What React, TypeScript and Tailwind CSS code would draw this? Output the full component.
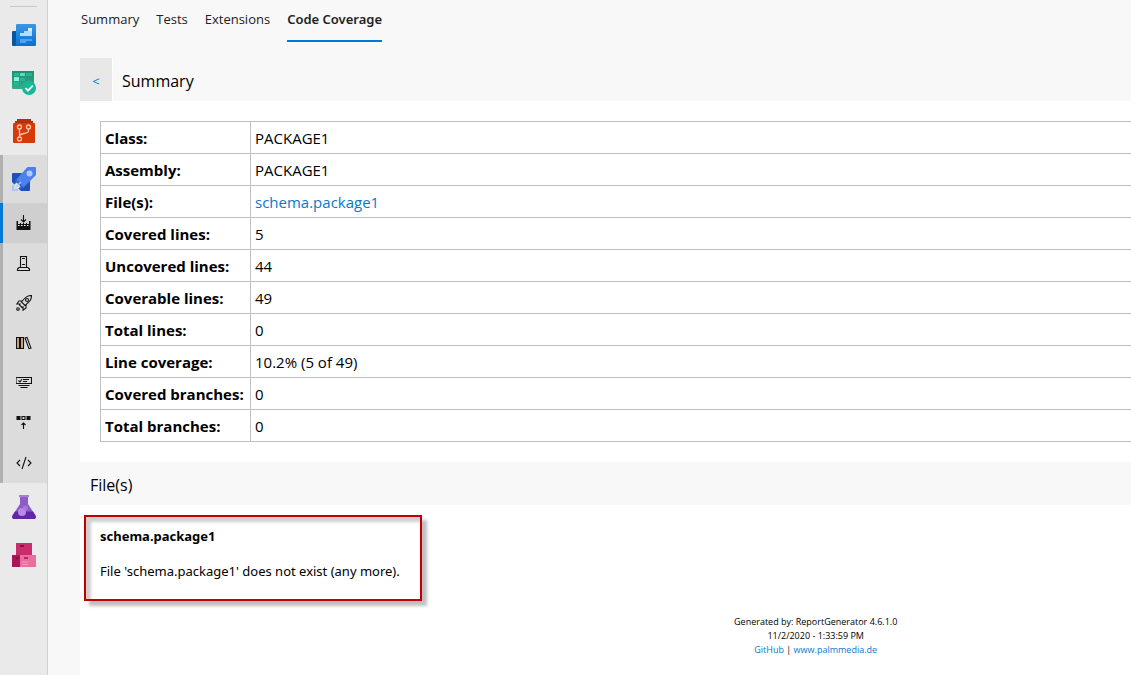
import type { ReactNode } from 'react'
import clsx from 'clsx'

type NavItem = { label: string; icon: ReactNode; active?: boolean }

function ServiceIcon({ children }: { children: ReactNode }) {
  return (
    <svg viewBox="0 0 24 24" className="size-6" aria-hidden="true">
      {children}
    </svg>
  )
}

function LineIcon({ children }: { children: ReactNode }) {
  return (
    <svg viewBox="0 0 16 16" className="size-4" fill="none" stroke="#111" strokeWidth="1.1" aria-hidden="true">
      {children}
    </svg>
  )
}

const topServices: NavItem[] = [
  {
    label: 'Overview',
    icon: (
      <ServiceIcon>
        <defs>
          <linearGradient id="overview" x1="0" y1="0" x2="0" y2="1">
            <stop offset="0" stopColor="#3c97e4" />
            <stop offset="1" stopColor="#0c6fd1" />
          </linearGradient>
        </defs>
        <path d="M0 9a1 1 0 0 1 1-1h3v12h3v3H1a1 1 0 0 1-1-1z" fill="#0b559f" />
        <path d="M5 1h18a1 1 0 0 1 1 1v20a1 1 0 0 1-1 1H3q1 0 1-2V2a1 1 0 0 1 1-1z" fill="url(#overview)" />
        <path d="M8 10h4V8h4V5h4v8H8z" fill="#b5dcfb" />
        <path d="M16 5h4v3h-4z" fill="#d8eefe" />
        <path d="M8 16h12v2h-6v2H8z" fill="#4ba5ee" />
      </ServiceIcon>
    ),
  },
  {
    label: 'Boards',
    icon: (
      <ServiceIcon>
        <defs>
          <linearGradient id="boards" x1="0" y1="0" x2="0" y2="1">
            <stop offset="0" stopColor="#1f8f70" />
            <stop offset="1" stopColor="#37ab8a" />
          </linearGradient>
        </defs>
        <path d="M0 0h22v18H1a1 1 0 0 1-1-1z" fill="url(#boards)" />
        <path d="M2 2h5v3H2zM14 2h6v3h-6zM2 11h5v3H2z" fill="#22b795" />
        <path d="M8 2h5v3H8z" fill="#5fd8bd" />
        <path d="M2 6h5v4H2z" fill="#86f0dc" />
        <path d="M8 7h5v3H8z" fill="#22b795" />
        <circle cx="17" cy="17" r="7" fill="#18b797" />
        <path d="M13.5 17l2.5 2.7 4.8-5" fill="none" stroke="#e7fff9" strokeWidth="1.8" />
      </ServiceIcon>
    ),
  },
  {
    label: 'Repos',
    icon: (
      <ServiceIcon>
        <path d="M5 0h14v2h2v3H3V2h2z" fill="#b5300a" />
        <path d="M1 5a1 1 0 0 1 1-1h20a1 1 0 0 1 1 1v18a1 1 0 0 1-1 1H2a1 1 0 0 1-1-1z" fill="#d63b07" />
        <g fill="none" stroke="#fbc3ae" strokeWidth="1.3">
          <path d="M7.5 10v8M16.5 10v2c0 3-9 2-9 5" />
          <circle cx="7.5" cy="8" r="2" />
          <circle cx="16.5" cy="8" r="2" />
          <circle cx="7.5" cy="20" r="2" />
        </g>
      </ServiceIcon>
    ),
  },
]

const pipelines: NavItem = {
  label: 'Pipelines',
  icon: (
    <ServiceIcon>
      <path d="M1 6h9l-7 12-3-3V7a1 1 0 0 1 1-1z" fill="#1f4fb8" />
      <path d="M18 13v10a1 1 0 0 1-1 1H9l-3-3z" fill="#1f4fb8" />
      <path d="M15.5 0H23a1 1 0 0 1 1 1v7L10.5 21.5 3 14z" fill="#4b80ed" />
      <path d="M4 12.5l7.5 7.5-3 2-6-6z" fill="#2c62cf" />
      <circle cx="17.500" cy="6.5" r="3" fill="#b3cbfb" />
      <path d="M3.5 16.5l4 4" stroke="#dbe6fc" strokeWidth="3" />
      <path d="M0 18h2v4h4v2H0z" fill="#a9c6fa" />
      <path d="M4.5 19.5L9 15" stroke="#a9c6fa" strokeWidth="1.5" />
    </ServiceIcon>
  ),
}

const pipelineItems: NavItem[] = [
  {
    label: 'Builds',
    active: true,
    icon: (
      <LineIcon>
        <path d="M7.5 0v7M5 4.5L7.5 7 10 4.5" />
        <path d="M.5 15V6H2v2h11V6h1.500v9z" fill="#111" stroke="none" />
        <path d="M2 8.500h11" stroke="#cfcfcf" strokeDasharray="2 1" />
        <path d="M2 10.500h12" stroke="#fff" strokeDasharray="1.500 1.500" />
      </LineIcon>
    ),
  },
  {
    label: 'Releases',
    icon: (
      <LineIcon>
        <path d="M4.500 12V1.500h6V12M6 3.500h3M6 9.500h3M3 12.500h9M3 12.500L1.500 14v1.500h12V14L12 12.500" />
      </LineIcon>
    ),
  },
  {
    label: 'Deployments',
    icon: (
      <LineIcon>
        <path d="M15.500.5c-4 0-6 1.500-10 6.500L9 10.500c5-4 6.500-6 6.500-10zM6.500 6H3L.8 9h3.500M10 9.500V13l-3 2.200V12M4.500 8.500L3.500 10 6 12.500l1.500-1" />
        <circle cx="11" cy="5" r="1.5" />
        <circle cx="2" cy="14" r="1.3" />
      </LineIcon>
    ),
  },
  {
    label: 'Library',
    icon: (
      <LineIcon>
        <path d="M.5 2.500h3v11h-3zM4.500 2.500h3v11h-3zM9 3l2-.6 4 10.700-2 .6z" />
        <path d="M2 3v10M6 3v10" stroke="#b9793a" />
      </LineIcon>
    ),
  },
  {
    label: 'Task groups',
    icon: (
      <LineIcon>
        <path d="M0 2.500h15.500v6H0zM7 4.500h6M7 6.500h4M2.500 10.500h11M4.500 12.500h7" />
        <path d="M2.500 5.500L4 7l2-3" />
      </LineIcon>
    ),
  },
  {
    label: 'Deployment groups',
    icon: (
      <LineIcon>
        <path d="M.5 1h4v4h-4zM10.500 1h4v4h-4z" fill="#111" stroke="none" />
        <path d="M6 1.500h3v3H6zM7.500 14V8M5.500 10l2-2 2 2" />
      </LineIcon>
    ),
  },
  {
    label: 'XAML',
    icon: (
      <LineIcon>
        <path d="M4 5L1 8l3 3M12 5l3 3-3 3M10 2L6 14" />
      </LineIcon>
    ),
  },
]

const bottomServices: NavItem[] = [
  {
    label: 'Test Plans',
    icon: (
      <ServiceIcon>
        <path d="M8 1h8v8l7.500 11.500c1 1.800 0 3.500-2 3.500h-19c-2 0-3-1.700-2-3.500L8 9z" fill="#8e5bc8" />
        <path d="M3 16.500h18l2.500 4c1 1.800 0 3.500-2 3.500h-19c-2 0-3-1.700-2-3.500z" fill="#6425a8" />
        <path d="M7 0h10v2H7z" fill="#a47ddd" />
        <circle cx="10" cy="17" r="4" fill="#b78bea" />
        <circle cx="13.5" cy="13" r="2.5" fill="#a678dc" />
      </ServiceIcon>
    ),
  },
  {
    label: 'Artifacts',
    icon: (
      <ServiceIcon>
        <path d="M4 0h16v12H4z" fill="#c92d6c" />
        <path d="M0 12h8v12H0z" fill="#ad1457" />
        <path d="M8 12h16v12H8z" fill="#ec6d9f" />
        <path d="M8 2h4v2H8zM4 14h3v2H4z" fill="#8d0f43" />
        <path d="M12 14h4v2h-4z" fill="#b8255f" />
        <path d="M10 19h6M10 21.500h6" stroke="#f59abd" />
      </ServiceIcon>
    ),
  },
]

const tabs = ['Summary', 'Tests', 'Extensions', 'Code Coverage']

const summary = [
  ['Class:', 'PACKAGE1'],
  ['Assembly:', 'PACKAGE1'],
  ['File(s):', 'schema.package1'],
  ['Covered lines:', '5'],
  ['Uncovered lines:', '44'],
  ['Coverable lines:', '49'],
  ['Total lines:', '0'],
  ['Line coverage:', '10.2% (5 of 49)'],
  ['Covered branches:', '0'],
  ['Total branches:', '0'],
]

function ServiceLink({ item }: { item: NavItem }) {
  return (
    <a href="#" aria-label={item.label} className="flex h-12 items-center justify-center">
      {item.icon}
    </a>
  )
}

function Sidebar() {
  return (
    <nav className="w-12 shrink-0 border-r border-[#d0d0d0] bg-[#eaeaea]">
      <div className="mx-[10px] mt-[6px] mb-1 h-px bg-[#c8c8c8]" />
      {topServices.map((item) => (
        <ServiceLink key={item.label} item={item} />
      ))}
      <div className="bg-[#dcdcdc]">
        <div className="border-l-[3px] border-[#b0b0b0] pr-[3px]">
          <ServiceLink item={pipelines} />
        </div>
        {pipelineItems.map((item) => (
          <a
            key={item.label}
            href="#"
            aria-label={item.label}
            className={clsx(
              'flex h-10 items-center justify-center border-l-[3px] pr-[3px]',
              item.active ? 'border-[#0078d4] bg-[#cfcfcf]' : 'border-[#b0b0b0]',
            )}
          >
            {item.icon}
          </a>
        ))}
      </div>
      {bottomServices.map((item) => (
        <ServiceLink key={item.label} item={item} />
      ))}
    </nav>
  )
}

export default function App() {
  return (
    <div className="flex min-h-screen bg-[#f8f8f8] font-['Open_Sans','Noto_Sans',sans-serif] text-black">
      <Sidebar />
      <main className="flex min-w-0 flex-1 flex-col pl-8">
        <div className="ml-px flex h-[42px] gap-[17px] text-[13px] text-[#222]">
          {tabs.map((tab) => (
            <a
              key={tab}
              href="#"
              className={clsx(
                'h-full pt-[9px] leading-5',
                tab === 'Code Coverage' && "border-b-2 border-[#0078d4] font-['Noto_Sans',sans-serif] font-semibold",
              )}
            >
              {tab}
            </a>
          ))}
        </div>

        <div className="mt-4 flex flex-1 flex-col bg-white">
          <div className="flex h-[43px] items-center bg-[#f8f8f8] pt-px">
            <a
              href="#"
              className="-mt-px flex h-[43px] w-[33px] items-center justify-center border-r border-white bg-[#e8e8e8] pt-1 text-[13px] text-[#0078d4]"
            >
              &lt;
            </a>
            <h1 className="ml-[9px] pt-px text-base">Summary</h1>
          </div>

          <div className="py-5 pl-5">
            <table className="w-full border-collapse text-[15px] leading-5">
              <tbody>
                {summary.map(([label, value]) => (
                  <tr key={label} className="h-8 border-y border-[#c0c0c0]">
                    <th className="w-[150px] border-x border-[#c0c0c0] px-1 text-left text-[15px] font-bold whitespace-nowrap">
                      {label}
                    </th>
                    <td className="px-1">
                      {label === 'File(s):' ? (
                        <a href="#" className="text-[#0d77cc]">
                          {value}
                        </a>
                      ) : (
                        value
                      )}
                    </td>
                  </tr>
                ))}
              </tbody>
            </table>
          </div>

          <h1 className="flex h-[43px] items-center bg-[#f8f8f8] pt-0.5 pl-[10px] text-base">File(s)</h1>

          <section className="mt-[10px] ml-1 h-[86px] w-[338px] border-2 border-[#c00000] pt-[9px] pl-[14px] font-['Noto_Sans',sans-serif] text-[13px] leading-5 whitespace-nowrap shadow-[5px_5px_3px_#c0c0c0,inset_5px_5px_3px_#d0d0d0]">
            <h2 className="font-bold">schema.package1</h2>
            <p className="mt-[15px]">File 'schema.package1' does not exist (any more).</p>
          </section>

          <footer className="mt-[14px] pl-[40%] text-center text-[9px] leading-[14px]">
            <p>Generated by: ReportGenerator 4.6.1.0</p>
            <p>11/2/2020 - 1:33:59 PM</p>
            <p>
              <a href="#" className="text-[#0d77cc]">
                GitHub
              </a>{' '}
              |{' '}
              <a href="#" className="text-[#0d77cc]">
                www.palmmedia.de
              </a>
            </p>
          </footer>
        </div>
      </main>
    </div>
  )
}
